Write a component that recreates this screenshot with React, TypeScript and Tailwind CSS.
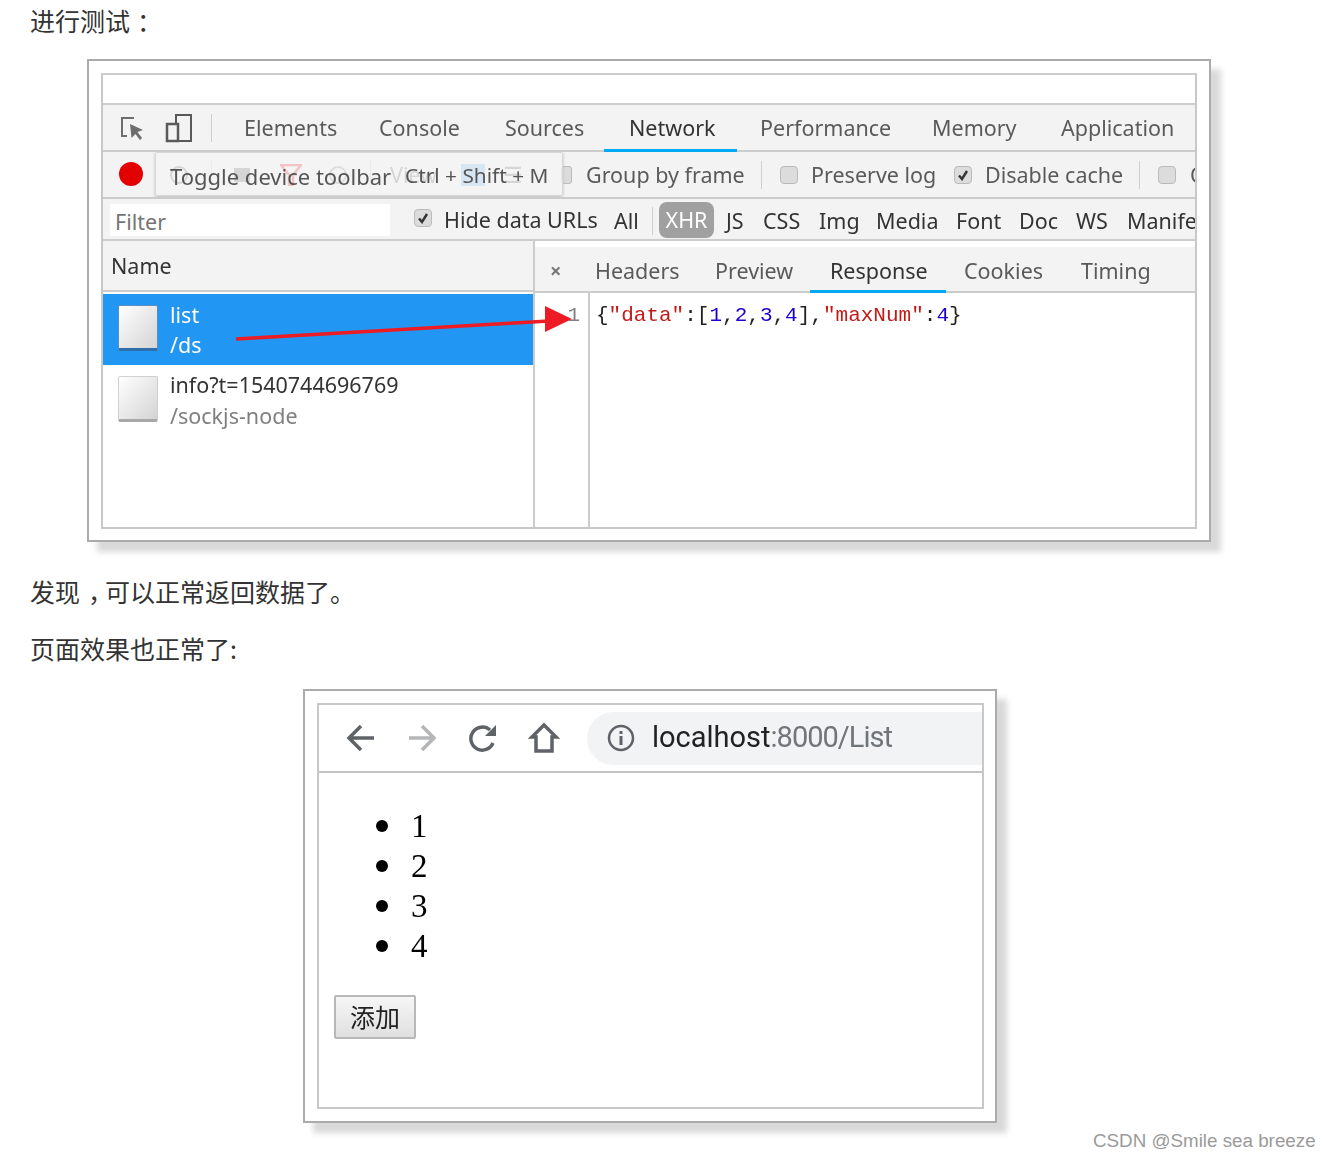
const sans = 'font-["Noto_Sans",sans-serif]'

function Check({ on = false }: { on?: boolean }) {
  return (
    <span className="flex h-[18px] w-[18px] shrink-0 items-center justify-center rounded-[4px] border border-[#bbbbbb] bg-[#dcdcdc]">
      {on && (
        <svg width="12" height="12" viewBox="0 0 12 12">
          <path d="M2 6.5 L5 10 L10 2" fill="none" stroke="#333333" strokeWidth="2.4" />
        </svg>
      )}
    </span>
  )
}

function Sep() {
  return <span className="h-[28px] w-[1px] shrink-0 bg-[#cfcfcf]" />
}

function DocIcon({ selected = false }: { selected?: boolean }) {
  return (
    <span
      className={`mb-[3px] h-[46px] w-[40px] shrink-0 rounded-[2px] border bg-gradient-to-br from-white to-[#d4d4d4] ${
        selected ? 'border-[#5b8fc0] border-b-[3px] border-b-[#2f6ea8]' : 'border-[#d0d0d0] border-b-[3px] border-b-[#a8a8a8]'
      }`}
    />
  )
}

function DevTools() {
  return (
    <div className="relative ml-[87px] mt-[21px] h-[483px] w-[1124px] border-2 border-[#ababab] bg-white p-[12px] shadow-[10px_10px_6px_#d9d9d9]">
      <div className={`flex h-[456px] w-[1096px] flex-col overflow-hidden border-2 border-[#c8c8c8] border-t-[#cccccc] text-[21.5px] leading-none blur-[0.5px] ${sans}`}>
        <div className="h-[30px] shrink-0 border-b-2 border-[#cccccc] bg-white" />

        {/* main tabs */}
        <div className="flex h-[47px] shrink-0 items-center border-b-2 border-[#cccccc] bg-[#f3f3f3] text-[#5a5a5a]">
          <svg width="26" height="26" viewBox="0 0 26 26" className="ml-[16px] shrink-0">
            <path d="M15 3 H3 V21 H8" fill="none" stroke="#6e6e6e" strokeWidth="2" />
            <path d="M11 9 L24 15 L18.5 17 L23 23 L21 25 L16.5 19 L12.5 23 Z" fill="#6e6e6e" />
          </svg>
          <svg width="28" height="30" viewBox="0 0 28 30" className="ml-[20px] shrink-0">
            <path d="M11 11 V2 H26 V28 H13" fill="none" stroke="#5a5a5a" strokeWidth="2" />
            <rect x="2" y="11" width="11" height="17" fill="none" stroke="#5a5a5a" strokeWidth="2.5" />
          </svg>
          <span className="ml-[18px] mr-[32px] h-[28px] w-[1px] shrink-0 bg-[#cfcfcf]" />
          <span className="w-[135px] shrink-0">Elements</span>
          <span className="w-[126px] shrink-0">Console</span>
          <span className="w-[124px] shrink-0">Sources</span>
          <span className="relative w-[131px] shrink-0 text-[#333333]">
            Network
            <span className="absolute left-[-25px] top-[32px] h-[3px] w-[133px] bg-[#03a9f4]" />
          </span>
          <span className="w-[172px] shrink-0">Performance</span>
          <span className="w-[129px] shrink-0">Memory</span>
          <span className="shrink-0">Application</span>
        </div>

        {/* record bar, sits under the tooltip */}
        <div className="relative flex h-[47px] shrink-0 items-center overflow-hidden border-b-2 border-[#cccccc] bg-[#f3f3f3] pt-[1px] text-[#5a5a5a]">
          <div className="flex w-[483px] shrink-0 items-center">
            <span className="ml-[16px] mb-[3px] h-[24px] w-[24px] shrink-0 rounded-full bg-[#e30000]" />
            <span className="ml-[27px] h-[18px] w-[18px] shrink-0 rounded-full border-2 border-[#777777]" />
            <span className="ml-[23px] h-[28px] w-[1px] shrink-0 bg-[#cfcfcf]" />
            <span className="ml-[22px] h-[14px] w-[16px] shrink-0 bg-[#777777]" />
            <svg width="22" height="22" viewBox="0 0 22 22" className="ml-[30px] shrink-0">
              <path d="M1 1 H21 L13 11 V21 H9 V11 Z" fill="none" stroke="#e33" strokeWidth="2.5" />
            </svg>
            <span className="ml-[27px] h-[18px] w-[18px] shrink-0 rounded-full border-2 border-[#999999]" />
            <span className="ml-[23px] h-[28px] w-[1px] shrink-0 bg-[#cfcfcf]" />
            <span className="ml-[19px] w-[71px] shrink-0 text-[#777777]">View</span>
            <span className="h-[22px] w-[24px] shrink-0 bg-[#7fbdee]" />
            <span className="ml-[18px] w-[58px] shrink-0 text-[#777777]">☰</span>
            <span className="h-[18px] w-[11px] shrink-0 rounded-[3px] border border-[#bbbbbb] bg-[#dcdcdc]" />
          </div>
          <span className="w-[175px] shrink-0">Group by frame</span>
          <Sep />
          <span className="ml-[18px]"><Check /></span>
          <span className="ml-[13px] w-[143px] shrink-0">Preserve log</span>
          <Check on />
          <span className="ml-[13px] w-[154px] shrink-0">Disable cache</span>
          <Sep />
          <span className="ml-[18px]"><Check /></span>
          <span className="ml-[14px] shrink-0">Offline</span>
          <div className="absolute left-[52px] top-0 flex h-[44px] w-[408px] items-center rounded-[2px] border border-[#d8d8d8] bg-[#f4f4f4]/75 pl-[14px] pt-[3px] text-[22px] text-[#555555] shadow-[0_1px_3px_#bbbbbb]">
            Toggle device toolbar<span className="ml-[14px] text-[20.8px]">Ctrl + Shift + M</span>
          </div>
        </div>

        {/* filter bar */}
        <div className="flex h-[42px] shrink-0 items-center overflow-hidden border-b-2 border-[#cccccc] bg-[#f3f3f3] pt-[3px] text-[#333333]">
          <div className="mb-[2px] ml-[7px] flex h-[32px] w-[280px] shrink-0 items-center bg-white pl-[5px] pt-[5px] text-[#757575]">Filter</div>
          <span className="ml-[24px] mb-[6px]"><Check on /></span>
          <span className="ml-[12px] mb-[1px] w-[170px] shrink-0">Hide data URLs</span>
          <span className="w-[38px] shrink-0">All</span>
          <Sep />
          <span className="mb-[2px] ml-[6px] mr-[12px] flex h-[36px] w-[55px] shrink-0 items-center justify-center rounded-[8px] bg-[#a0a0a0] text-white">XHR</span>
          <span className="w-[37px] shrink-0">JS</span>
          <span className="w-[56px] shrink-0">CSS</span>
          <span className="w-[57px] shrink-0">Img</span>
          <span className="w-[80px] shrink-0">Media</span>
          <span className="w-[63px] shrink-0">Font</span>
          <span className="w-[57px] shrink-0">Doc</span>
          <span className="w-[51px] shrink-0">WS</span>
          <span className="shrink-0">Manifest</span>
        </div>

        <div className="flex min-h-0 flex-1">
          {/* request list */}
          <div className="flex w-[432px] shrink-0 flex-col border-r-2 border-[#cccccc]">
            <div className="flex h-[51px] shrink-0 items-center border-b-2 border-[#cccccc] bg-[#f3f3f3] pl-[8px] text-[#333333]">Name</div>
            <div className="mt-[2px] flex h-[71px] shrink-0 items-center gap-[12px] bg-[#2196f3] pl-[15px] text-white">
              <DocIcon selected />
              <div className="flex flex-col gap-[8px]">
                <span className="leading-[22px]">list</span>
                <span className="leading-[22px]">/ds</span>
              </div>
            </div>
            <div className="flex h-[71px] shrink-0 items-center gap-[12px] pl-[15px]">
              <DocIcon />
              <div className="flex flex-col gap-[9px]">
                <span className="leading-[22px] text-[#333333]">info?t=1540744696769</span>
                <span className="leading-[22px] text-[#808080]">/sockjs-node</span>
              </div>
            </div>
          </div>

          {/* details */}
          <div className="flex min-w-0 flex-1 flex-col">
            <div className="h-[6px] shrink-0 bg-white" />
            <div className="flex h-[46px] shrink-0 items-center border-b-2 border-[#cccccc] bg-[#f3f3f3] pt-[4px] text-[#5a5a5a]">
              <span className="ml-[15px] w-[45px] shrink-0 text-[20px] font-bold text-[#777777]">×</span>
              <span className="w-[120px] shrink-0">Headers</span>
              <span className="w-[115px] shrink-0">Preview</span>
              <span className="relative w-[134px] shrink-0 text-[#333333]">
                Response
                <span className="absolute left-[-20px] top-[30px] h-[3px] w-[136px] bg-[#03a9f4]" />
              </span>
              <span className="w-[117px] shrink-0">Cookies</span>
              <span className="shrink-0">Timing</span>
            </div>
            <div className="flex min-h-0 flex-1">
              <div className="w-[55px] shrink-0 border-r-2 border-[#cccccc] pr-[8px] pt-[12px] text-right font-['Liberation_Mono',monospace] text-[21px] text-[#808080]">1</div>
              <div className="whitespace-pre pl-[6px] pt-[12px] font-['Liberation_Mono',monospace] text-[21px] text-[#222222]">
                {'{'}<span className="text-[#c41a16]">"data"</span>:[<span className="text-[#1c00cf]">1</span>,<span className="text-[#1c00cf]">2</span>,<span className="text-[#1c00cf]">3</span>,<span className="text-[#1c00cf]">4</span>],<span className="text-[#c41a16]">"maxNum"</span>:<span className="text-[#1c00cf]">4</span>{'}'}
              </div>
            </div>
          </div>
        </div>
      </div>

      {/* red annotation arrow */}
      <svg width="345" height="40" viewBox="0 0 345 40" className="absolute left-[145px] top-[242px]">
        <path d="M2 36 L315 18" stroke="#ed1c24" strokeWidth="3.5" fill="none" />
        <path d="M311 3 L338 16 L311 29 Z" fill="#ed1c24" />
      </svg>
    </div>
  )
}

function Browser() {
  return (
    <div className="ml-[303px] mt-[23px] h-[434px] w-[694px] border-2 border-[#ababab] bg-white p-[12px] shadow-[10px_10px_6px_#d9d9d9]">
      <div className="flex h-[406px] w-[667px] flex-col overflow-hidden border-2 border-[#c8c8c8] blur-[0.4px]">
        <div className="flex h-[68px] shrink-0 items-center border-b-2 border-[#c4c4c4] bg-white">
          <svg width="30" height="30" viewBox="0 0 30 30" className="ml-[27px] shrink-0">
            <path d="M28 15 H4 M15 3 L3 15 L15 27" fill="none" stroke="#5f6368" strokeWidth="3.5" />
          </svg>
          <svg width="30" height="30" viewBox="0 0 30 30" className="ml-[31px] shrink-0">
            <path d="M2 15 H26 M15 3 L27 15 L15 27" fill="none" stroke="#b4b6b8" strokeWidth="3.5" />
          </svg>
          <svg width="30" height="30" viewBox="0 0 30 30" className="ml-[31px] shrink-0">
            <path d="M25 20 A11.5 11.5 0 1 1 22 7" fill="none" stroke="#5f6368" strokeWidth="3.5" />
            <path d="M28 2 V13 H17 Z" fill="#5f6368" />
          </svg>
          <svg width="32" height="32" viewBox="0 0 32 32" className="ml-[30px] shrink-0">
            <path d="M16 3 L28 15 H24 V29 H8 V15 H4 Z" fill="none" stroke="#5f6368" strokeWidth="3.5" />
          </svg>
          <div className="ml-[27px] flex h-[53px] flex-1 items-center rounded-l-full bg-[#f1f3f4] pl-[20px] font-['Roboto',sans-serif] text-[29px]">
            <svg width="28" height="28" viewBox="0 0 28 28" className="shrink-0">
              <circle cx="14" cy="14" r="12" fill="none" stroke="#5f6368" strokeWidth="2.5" />
              <path d="M14 12 V21 M14 7 V10" stroke="#5f6368" strokeWidth="3" />
            </svg>
            <span className="ml-[17px] text-[#222222]">localhost</span>
            <span className="tracking-[-1px] text-[#70757a]">:8000/List</span>
          </div>
        </div>

        <ul className="ml-[57px] mt-[33px] font-['Liberation_Serif',serif] text-[33px] leading-[40px] text-black">
          {[1, 2, 3, 4].map((n) => (
            <li key={n} className="flex h-[40px] items-center">
              <span className="h-[12px] w-[12px] shrink-0 rounded-full bg-black" />
              <span className="ml-[23px]">{n}</span>
            </li>
          ))}
        </ul>

        <button className="ml-[15px] mt-[29px] flex h-[44px] w-[82px] items-center justify-center rounded-[2px] border-2 border-[#b8b8b8] bg-gradient-to-b from-[#f6f6f6] to-[#e0e0e0] font-['Noto_Sans_CJK_SC',sans-serif] text-[25px] text-[#222222]">
          添加
        </button>
      </div>
    </div>
  )
}

export default function App() {
  const p = "ml-[30px] font-['Noto_Sans_CJK_SC',sans-serif] text-[25px] leading-[36px] text-[#333333]"
  return (
    <div className="relative h-[1156px] w-[1330px] overflow-hidden bg-white">
      <p className={`${p} pt-[2px]`}>
        进行测试<span className="inline-block w-[25px] pl-[7px]">：</span>
      </p>
      <DevTools />
      <p className={`${p} mt-[31px]`}>
        发现<span className="inline-block w-[25px] pl-[8px]">，</span>可以正常返回数据了。
      </p>
      <p className={`${p} mt-[21px]`}>页面效果也正常了:</p>
      <Browser />
      <span className="absolute left-[1093px] top-[1127px] font-['Liberation_Sans',sans-serif] text-[18.8px] text-[#9a9a9a]">
        CSDN @Smile sea breeze
      </span>
    </div>
  )
}
